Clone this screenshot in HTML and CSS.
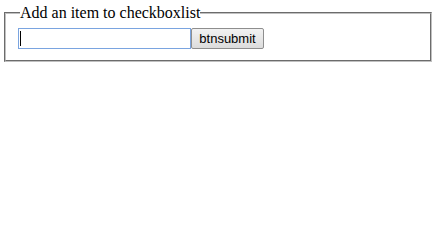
FILE: index.html
```html
<!DOCTYPE html>
<html lang="en">
<head>
  <meta charset="UTF-8" />
  <title>Add item</title>
  <link rel="stylesheet" href="styles.css">
</head>
<body>
  <fieldset class="add-box">
    <legend class="add-title">Add an item to checkboxlist</legend>
    <div class="add-row">
      <span class="input-wrap">
        <input type="text" class="item-input" autofocus>
        <span class="caret"></span>
      </span>
      <button type="button" class="btn-submit">btnsubmit</button>
    </div>
  </fieldset>
</body>
</html>
```

FILE: styles.css
```css
body {
  margin: 0;
  padding: 4px 8px 0 4px;
  background: #fff;
  font-family: "Liberation Serif", serif;
}
.add-box {
  margin: 0;
  padding: 6px 12px 11px 12px;
  border: 2px groove #c0c0c0;
}
.add-title {
  padding: 0;
  margin-left: 2px;
  font-size: 16px;
  color: #000;
}
.add-row {
  display: flex;
  align-items: stretch;
}
.input-wrap {
  position: relative;
  display: flex;
}
.item-input {
  box-sizing: border-box;
  width: 173px;
  height: 21px;
  margin: 0;
  padding: 0 2px;
  border: 1px solid #7aa4e0;
  outline: none;
  font-family: "Liberation Sans", sans-serif;
  font-size: 13px;
}
/* fake text caret, the input is focused in the shot */
.caret {
  position: absolute;
  left: 2px;
  top: 3px;
  width: 1px;
  height: 15px;
  background: #000;
}
.btn-submit {
  box-sizing: border-box;
  width: 73px;
  height: 21px;
  margin: 0;
  padding: 0 4px;
  border: 1px solid #8e8e8e;
  border-radius: 2px;
  background: linear-gradient(#f2f2f2, #dcdcdc);
  font-family: "Liberation Sans", sans-serif;
  font-size: 13px;
  color: #000;
}
```
